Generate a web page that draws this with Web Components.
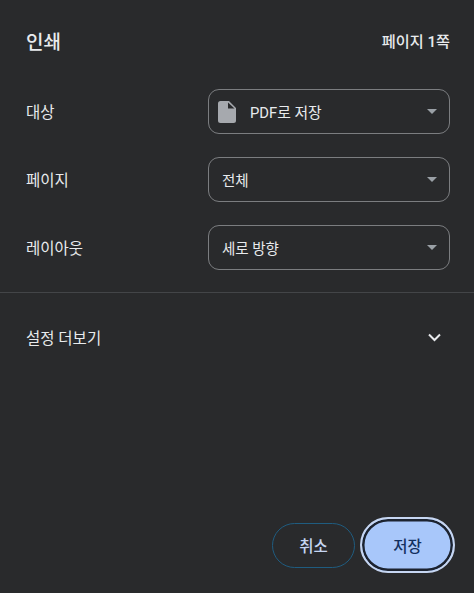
<!DOCTYPE html>
<html lang="ko">
<head>
<meta charset="utf-8">
<title>인쇄</title>
<style>
    html, body { margin: 0; padding: 0; background: #292a2c; }
    body { font-family: "Roboto", "Noto Sans CJK KR", sans-serif; color: #e8eaed; }
</style>
</head>
<body>

<template id="print-dialog-template">
    <style>
        *, *::before, *::after { box-sizing: border-box; }
        :host {
            display: flex;
            flex-flow: column;
            height: 593px;
            background: #292a2c;
            overflow: hidden;
        }
        .header {
            display: flex;
            justify-content: space-between;
            align-items: center;
            height: 30px;
            margin: 25px 24px 0 26px;
        }
        .title { font-size: 19px; font-weight: 500; color: #e8eaed; }
        .count { font-size: 15.2px; font-weight: 500; color: #e8eaed; }
        .rows {
            display: flex;
            flex-flow: column;
            gap: 23px;
            margin: 34px 24px 0 26px;
        }
        hr {
            margin: 22px 0 0 0;
            border: 0;
            height: 1px;
            background: #434548;
        }
        .footer {
            margin-top: auto;
            display: flex;
            justify-content: flex-end;
            align-items: center;
            gap: 5px;
            padding: 0 19px 20px 0;
        }
    </style>
    <div class="header">
        <span class="title">인쇄</span>
        <span class="count">페이지 1쪽</span>
    </div>
    <div class="rows"><slot name="rows"></slot></div>
    <hr>
    <slot name="more"></slot>
    <div class="footer"><slot name="actions"></slot></div>
</template>

<template id="print-row-template">
    <style>
        *, *::before, *::after { box-sizing: border-box; }
        :host { display: flex; align-items: center; justify-content: space-between; height: 45px; }
        .label { font-size: 15.5px; color: #e8eaed; position: relative; top: -1px; }
        .select {
            display: flex;
            align-items: center;
            width: 242px;
            height: 45px;
            padding: 0 12px 0 13px;
            border: 1px solid #7b7d80;
            border-radius: 11px;
            font-size: 14.5px;
            color: #e8eaed;
        }
        :host([icon]) .select { padding-left: 9px; font-size: 14.8px; }
        .value { flex: 1; display: flex; align-items: center; }
        .caret { width: 10px; height: 5px; flex: none; }
        ::slotted(svg) { margin-right: 14px; flex: none; }
    </style>
    <span class="label"></span>
    <div class="select">
        <slot name="icon"></slot>
        <span class="value"></span>
        <svg class="caret" viewBox="0 0 10 5"><path d="M0 0h10L5 5z" fill="#9aa0a6"/></svg>
    </div>
</template>

<template id="print-more-template">
    <style>
        *, *::before, *::after { box-sizing: border-box; }
        :host {
            display: flex;
            align-items: center;
            justify-content: space-between;
            height: 30px;
            margin: 29px 33px 0 26px;
        }
        .label { font-size: 15.5px; color: #e8eaed; }
        svg { width: 13px; height: 9px; }
    </style>
    <span class="label"><slot></slot></span>
    <svg viewBox="0 0 13 9"><path d="M1 1.5 6.5 7 12 1.5" fill="none" stroke="#e8eaed" stroke-width="2"/></svg>
</template>

<template id="print-button-template">
    <style>
        *, *::before, *::after { box-sizing: border-box; }
        :host {
            box-sizing: border-box;
            display: inline-flex;
            align-items: center;
            justify-content: center;
            flex: none;
            font-size: 15.5px;
            font-weight: 500;
            border-radius: 999px;
        }
        :host(.cancel) {
            width: 83px;
            height: 45px;
            border: 1.5px solid #1f5c80;
            color: #c6d6f2;
        }
        :host(.save) {
            width: 95px;
            height: 56px;
            background: #a8c7fa;
            color: #12305f;
            border: 2.5px solid #c6d6f2;
            box-shadow: inset 0 0 0 2.5px #1c2330;
        }
    </style>
    <slot></slot>
</template>

<print-dialog>
    <print-row slot="rows" label="대상" value="PDF로 저장" icon>
        <svg slot="icon" width="18" height="22" viewBox="0 0 18 22">
            <path d="M2.5 0H11l7 7v12.5a2.5 2.5 0 0 1-2.5 2.5h-13A2.5 2.5 0 0 1 0 19.5v-17A2.5 2.5 0 0 1 2.5 0z" fill="#a6a9ae"/>
            <path d="M10 1.5V7.5h6.5z" fill="#292a2c"/>
        </svg>
    </print-row>
    <print-row slot="rows" label="페이지" value="전체"></print-row>
    <print-row slot="rows" label="레이아웃" value="세로 방향"></print-row>
    <print-more slot="more">설정 더보기</print-more>
    <print-button slot="actions" class="cancel">취소</print-button>
    <print-button slot="actions" class="save">저장</print-button>
</print-dialog>

<script type="module">
    function shadow_from(el, id) {
        const template_clone = document.getElementById(id).content.cloneNode(true);
        el.attachShadow({ mode: "open" }).append(template_clone);
    }

    customElements.define("print-dialog", class extends HTMLElement {
        constructor() {
            super();
            shadow_from(this, "print-dialog-template");
        }
    });

    customElements.define("print-row", class extends HTMLElement {
        constructor() {
            super();
            shadow_from(this, "print-row-template");
            this.shadowRoot.querySelector(".label").textContent = this.getAttribute("label");
            this.shadowRoot.querySelector(".value").textContent = this.getAttribute("value");
        }
    });

    customElements.define("print-more", class extends HTMLElement {
        constructor() {
            super();
            shadow_from(this, "print-more-template");
        }
    });

    customElements.define("print-button", class extends HTMLElement {
        constructor() {
            super();
            shadow_from(this, "print-button-template");
        }
    });
</script>
</body>
</html>
